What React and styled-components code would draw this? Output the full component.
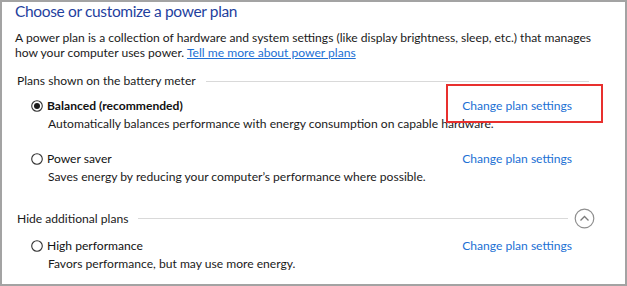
import React from "react";
import styled, { createGlobalStyle } from "styled-components";

const GlobalStyle = createGlobalStyle`
  html, body {
    margin: 0;
    padding: 0;
    background: #ffffff;
  }
  body {
    font-family: Lato, "Noto Sans", sans-serif;
    color: #1a1a1a;
  }
`;

const Frame = styled.div`
  box-sizing: border-box;
  width: 627px;
  height: 286px;
  border: 2px solid #a3a3a3;
  background: #ffffff;
  padding: 0 36px 0 13px;
  overflow: hidden;
`;

const Title = styled.h1`
  margin: 0;
  font-size: 15.5px;
  font-weight: 400;
  line-height: 19px;
  color: #1f3f9e;
  letter-spacing: -0.35px;
`;

const Intro = styled.p`
  margin: 9px 0 0;
  font-size: 12.1px;
  line-height: 15px;
  white-space: nowrap;
`;

const Link = styled.a`
  color: #2170d4;
  text-decoration: ${(p) => (p.$underline ? "underline" : "none")};
  cursor: pointer;
`;

const SectionHeader = styled.div`
  display: flex;
  align-items: center;
  gap: 10px;
  margin: ${(p) => p.$top}px 0 0 2px;
  font-size: 12.1px;
  line-height: 16px;
`;

const Rule = styled.div`
  flex: 1;
  height: 1px;
  background: #d9d9d9;
`;

const Plan = styled.div`
  display: grid;
  grid-template-columns: 1fr auto;
  grid-template-rows: 16px 16px;
  row-gap: 2px;
  margin: ${(p) => p.$top}px 0 0 16px;
  padding-right: 17px;
  font-size: 12.1px;
`;

const PlanName = styled.label`
  display: flex;
  align-items: center;
  gap: 4px;
  line-height: 16px;
  font-weight: ${(p) => (p.$bold ? 700 : 400)};
  color: #111;
`;

const PlanDesc = styled.div`
  grid-column: 1 / span 2;
  padding-left: 17px;
  line-height: 16px;
`;

const LinkCell = styled.div`
  position: relative;
  line-height: 16px;
  padding-left: 12px;

  ${(p) =>
    p.$highlight &&
    `
    &::after {
      content: "";
      position: absolute;
      left: -4px;
      top: -14px;
      width: 153px;
      height: 35px;
      border: 2px solid #e8302e;
      pointer-events: none;
    }
  `}
`;

const Toggle = styled.button`
  width: 21px;
  height: 21px;
  padding: 0;
  margin: 0 -6px 0 -4px;
  border: none;
  background: none;
  display: flex;
  align-items: center;
  justify-content: center;
`;

function Radio({ checked }) {
  return (
    <svg width="12" height="12" viewBox="0 0 12 12">
      <circle cx="6" cy="6" r="5.3" fill="#fff" stroke="#333" strokeWidth="1.1" />
      {checked && <circle cx="6" cy="6" r="3" fill="#1a1a1a" />}
    </svg>
  );
}

function ChevronCircle() {
  return (
    <svg width="21" height="21" viewBox="0 0 21 21">
      <circle cx="10.5" cy="10.5" r="9.3" fill="#fff" stroke="#8f8f8f" strokeWidth="1.2" />
      <path d="M6.5 12.5 L10.5 8.5 L14.5 12.5" fill="none" stroke="#7a7a7a" strokeWidth="1.3" />
    </svg>
  );
}

function PlanRow({ name, desc, checked, bold, highlight, top }) {
  return (
    <Plan $top={top}>
      <PlanName $bold={bold}>
        <Radio checked={checked} />
        {name}
      </PlanName>
      <LinkCell $highlight={highlight}>
        <Link>Change plan settings</Link>
      </LinkCell>
      <PlanDesc>{desc}</PlanDesc>
    </Plan>
  );
}

export default function App() {
  return (
    <>
      <GlobalStyle />
      <Frame>
        <Title>Choose or customize a power plan</Title>
        <Intro>
          A power plan is a collection of hardware and system settings (like display brightness, sleep, etc.) that manages
          <br />
          how your computer uses power. <Link $underline>Tell me more about power plans</Link>
        </Intro>
        <SectionHeader $top={13}>
          Plans shown on the battery meter
          <Rule />
        </SectionHeader>
        <PlanRow
          top={9}
          checked
          bold
          highlight
          name="Balanced (recommended)"
          desc="Automatically balances performance with energy consumption on capable hardware."
        />
        <PlanRow
          top={19}
          name="Power saver"
          desc="Saves energy by reducing your computer’s performance where possible."
        />
        <SectionHeader $top={23}>
          Hide additional plans
          <Rule />
          <Toggle aria-label="Hide additional plans">
            <ChevronCircle />
          </Toggle>
        </SectionHeader>
        <PlanRow
          top={9}
          name="High performance"
          desc="Favors performance, but may use more energy."
        />
      </Frame>
    </>
  );
}
